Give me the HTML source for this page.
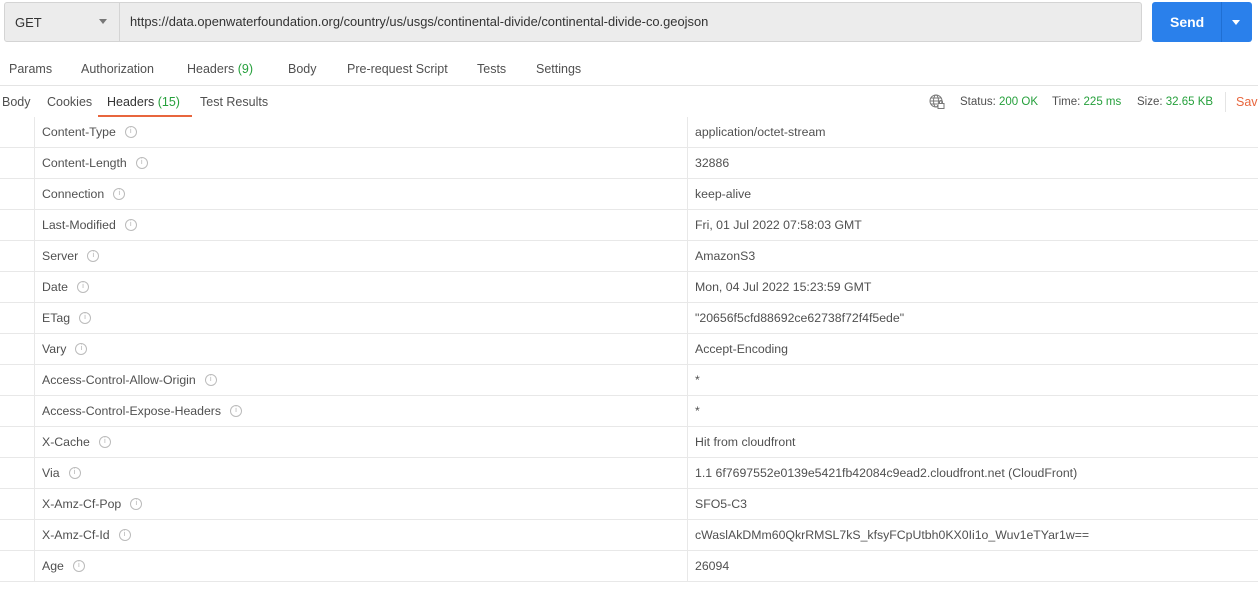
<!DOCTYPE html>
<html><head><meta charset="utf-8"><style>
*{margin:0;padding:0;box-sizing:border-box}
body{width:1258px;height:595px;background:#fff;font-family:"Liberation Sans",sans-serif;font-size:12px;color:#505050;position:relative;overflow:hidden}
.abs{position:absolute;white-space:nowrap}
.g{color:#26a03c}
.row{position:absolute;left:0;width:1258px;height:31px;border-bottom:1px solid #e8e8e8;font-size:12.3px;line-height:15px}
.row .k{position:absolute;left:42px;top:8px}
.row .v{position:absolute;left:695px;top:8px}
.i{display:inline-block;width:12px;height:12px;border:1px solid #bbb;border-radius:50%;font-size:7px;line-height:10px;text-align:center;color:#aaa;margin-left:9px;vertical-align:top;margin-top:1px}
</style></head><body>
<div class="abs" style="left:4px;top:2px;width:1138px;height:40px;background:#ececec;border:1px solid #d4d4d4;border-radius:3px"></div>
<div class="abs" style="left:119px;top:3px;width:1px;height:38px;background:#d4d4d4"></div>
<div class="abs" style="left:15px;top:15px;font-size:13px;color:#333">GET</div>
<div class="abs" style="left:99px;top:19px;width:0;height:0;border-left:4px solid transparent;border-right:4px solid transparent;border-top:5px solid #777"></div>
<div class="abs" style="left:130px;top:14px;font-size:12.9px;color:#333">https://data.openwaterfoundation.org/country/us/usgs/continental-divide/continental-divide-co.geojson</div>
<div class="abs" style="left:1152px;top:2px;width:100px;height:40px;background:#2a80eb;border-radius:3px"></div>
<div class="abs" style="left:1221px;top:2px;width:1px;height:40px;background:#1f6fd3"></div>
<div class="abs" style="left:1170px;top:14px;font-size:14px;font-weight:bold;color:#fff">Send</div>
<div class="abs" style="left:1232px;top:20px;width:0;height:0;border-left:4px solid transparent;border-right:4px solid transparent;border-top:5px solid #fff"></div>

<div class="abs" style="left:9px;top:62px;font-size:12.5px">Params</div>
<div class="abs" style="left:81px;top:62px;font-size:12.5px">Authorization</div>
<div class="abs" style="left:187px;top:62px;font-size:12.5px">Headers <span class="g">(9)</span></div>
<div class="abs" style="left:288px;top:62px;font-size:12.5px">Body</div>
<div class="abs" style="left:347px;top:62px;font-size:12.5px">Pre-request Script</div>
<div class="abs" style="left:477px;top:62px;font-size:12.5px">Tests</div>
<div class="abs" style="left:536px;top:62px;font-size:12.5px">Settings</div>
<div class="abs" style="left:0;top:85px;width:1258px;height:1px;background:#e4e4e4"></div>

<div class="abs" style="left:2px;top:95px;font-size:12.5px">Body</div>
<div class="abs" style="left:47px;top:95px;font-size:12.5px">Cookies</div>
<div class="abs" style="left:107px;top:95px;font-size:12.5px;color:#333">Headers <span class="g">(15)</span></div>
<div class="abs" style="left:200px;top:95px;font-size:12.5px">Test Results</div>
<div class="abs" style="left:98px;top:115px;width:94px;height:2px;background:#e8663d"></div>
<svg class="abs" style="left:929px;top:94px" width="17" height="16" viewBox="0 0 17 16" fill="none" stroke="#777" stroke-width="1"><circle cx="7" cy="7" r="6"/><ellipse cx="7" cy="7" rx="2.5" ry="6"/><path d="M1 7h12M2 4h10M2 10h6"/><rect x="9" y="9.5" width="6" height="5" fill="#fff"/><path d="M10.5 9.5v-1.5a1.5 1.5 0 0 1 3 0v1.5"/></svg>
<div class="abs" style="left:960px;top:96px;font-size:11.5px">Status: <span class="g">200 OK</span></div>
<div class="abs" style="left:1052px;top:96px;font-size:11.5px">Time: <span class="g">225 ms</span></div>
<div class="abs" style="left:1137px;top:96px;font-size:11.5px">Size: <span class="g">32.65 KB</span></div>
<div class="abs" style="left:1225px;top:92px;width:1px;height:20px;background:#e4e4e4"></div>
<div class="abs" style="left:1236px;top:95px;font-size:12.5px;color:#e8663d">Save</div>

<div class="abs" style="left:34px;top:117px;width:1px;height:465px;background:#e8e8e8"></div>
<div class="abs" style="left:687px;top:117px;width:1px;height:465px;background:#e8e8e8"></div>

<div class="row" style="top:117px"><span class="k">Content-Type<span class="i">i</span></span><span class="v">application/octet-stream</span></div>
<div class="row" style="top:148px"><span class="k">Content-Length<span class="i">i</span></span><span class="v">32886</span></div>
<div class="row" style="top:179px"><span class="k">Connection<span class="i">i</span></span><span class="v">keep-alive</span></div>
<div class="row" style="top:210px"><span class="k">Last-Modified<span class="i">i</span></span><span class="v">Fri, 01 Jul 2022 07:58:03 GMT</span></div>
<div class="row" style="top:241px"><span class="k">Server<span class="i">i</span></span><span class="v">AmazonS3</span></div>
<div class="row" style="top:272px"><span class="k">Date<span class="i">i</span></span><span class="v">Mon, 04 Jul 2022 15:23:59 GMT</span></div>
<div class="row" style="top:303px"><span class="k">ETag<span class="i">i</span></span><span class="v">"20656f5cfd88692ce62738f72f4f5ede"</span></div>
<div class="row" style="top:334px"><span class="k">Vary<span class="i">i</span></span><span class="v">Accept-Encoding</span></div>
<div class="row" style="top:365px"><span class="k">Access-Control-Allow-Origin<span class="i">i</span></span><span class="v">*</span></div>
<div class="row" style="top:396px"><span class="k">Access-Control-Expose-Headers<span class="i">i</span></span><span class="v">*</span></div>
<div class="row" style="top:427px"><span class="k">X-Cache<span class="i">i</span></span><span class="v">Hit from cloudfront</span></div>
<div class="row" style="top:458px"><span class="k">Via<span class="i">i</span></span><span class="v">1.1 6f7697552e0139e5421fb42084c9ead2.cloudfront.net (CloudFront)</span></div>
<div class="row" style="top:489px"><span class="k">X-Amz-Cf-Pop<span class="i">i</span></span><span class="v">SFO5-C3</span></div>
<div class="row" style="top:520px"><span class="k">X-Amz-Cf-Id<span class="i">i</span></span><span class="v">cWaslAkDMm60QkrRMSL7kS_kfsyFCpUtbh0KX0Ii1o_Wuv1eTYar1w==</span></div>
<div class="row" style="top:551px"><span class="k">Age<span class="i">i</span></span><span class="v">26094</span></div>
</body></html>
